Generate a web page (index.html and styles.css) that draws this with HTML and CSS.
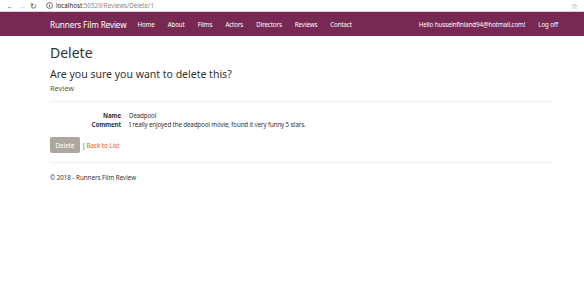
FILE: index.html
```html
<!DOCTYPE html>
<html lang="en">
<head>
  <meta charset="UTF-8">
  <title>Delete - Runners Film Review</title>
  <link rel="stylesheet" href="styles.css">
</head>
<body>
  <div class="chrome">
    <span class="nav-btn">&#8592;</span>
    <span class="nav-btn dim">&#8594;</span>
    <span class="nav-btn">&#8635;</span>
    <div class="url">
      <svg class="info" width="7" height="7" viewBox="0 0 10 10"><circle cx="5" cy="5" r="4.2" fill="none" stroke="#555" stroke-width="1.2"/><rect x="4.4" y="4.3" width="1.2" height="3" fill="#555"/><rect x="4.4" y="2.5" width="1.2" height="1.1" fill="#555"/></svg>
      <span class="host">localhost</span><span class="path">:50529/Reviews/Delete/1</span>
    </div>
    <span class="star">&#9734;</span>
  </div>

  <nav class="navbar">
    <a class="brand" href="#">Runners Film Review</a>
    <ul class="menu">
      <li>Home</li>
      <li>About</li>
      <li>Films</li>
      <li>Actors</li>
      <li>Directors</li>
      <li>Reviews</li>
      <li>Contact</li>
    </ul>
    <ul class="menu right">
      <li>Hello husseinfinland94@hotmail.com!</li>
      <li>Log off</li>
    </ul>
  </nav>

  <div class="container">
    <h1>Delete</h1>
    <h3>Are you sure you want to delete this?</h3>
    <div>
      <h4>Review</h4>
      <hr class="top">
      <dl class="details">
        <dt>Name</dt>
        <dd>Deadpool</dd>
        <dt>Comment</dt>
        <dd>I really enjoyed the deadpool movie, found it very funny 5 stars.</dd>
      </dl>
      <div class="actions">
        <button class="btn">Delete</button>
        <span class="sep">|</span>
        <a href="#">Back to List</a>
      </div>
    </div>
    <hr class="bottom">
    <footer>&copy; 2018 - Runners Film Review</footer>
  </div>
</body>
</html>
```

FILE: styles.css
```css
body {
  margin: 0;
  font-family: 'Noto Sans', sans-serif;
  color: #333;
  background: #fff;
}
.chrome {
  display: flex;
  align-items: center;
  height: 11px;
  padding: 0 6px;
  border-bottom: 1px solid #d4d4d4;
  font-size: 8px;
  color: #555;
}
.nav-btn {
  width: 12px;
  font-size: 8px;
  line-height: 11px;
}
.nav-btn.dim {
  color: #bbb;
}
.url {
  flex: 1;
  display: flex;
  align-items: center;
  margin-left: 4px;
  font-size: 6.2px;
}
.info {
  margin-right: 3px;
}
.host {
  color: #222;
}
.path {
  color: #888;
}
.star {
  font-size: 8px;
  color: #666;
}
.navbar {
  display: flex;
  align-items: center;
  height: 24px;
  padding: 0 26px 0 50px;
  background: #772953;
  color: #fff;
}
.brand {
  color: #fff;
  text-decoration: none;
  font-size: 8.2px;
  letter-spacing: -0.15px;
  margin-right: 11px;
}
.menu {
  display: flex;
  list-style: none;
  margin: 0;
  padding: 0;
  font-size: 6.2px;
  letter-spacing: -0.1px;
  gap: 13px;
}
.menu.right {
  margin-left: auto;
}
.container {
  width: 502px;
  padding: 0 32px 0 50px;
}
h1 {
  font-weight: 400;
  font-size: 14px;
  margin: 8px 0 5px;
  line-height: 18px;
}
h3 {
  font-weight: 400;
  font-size: 10.5px;
  margin: 0 0 1px;
  line-height: 15px;
}
h4 {
  font-weight: 400;
  font-size: 7.4px;
  margin: 0;
  line-height: 11px;
  color: #555;
}
hr {
  border: 0;
  border-top: 1px solid #eee;
  margin: 8px 0;
}
hr.top {
  margin: 7px 0 9px;
}
hr.bottom {
  margin: 9px 0 10px;
}
.details {
  display: grid;
  grid-template-columns: 71px 1fr;
  column-gap: 8px;
  margin: 0 0 8px;
  font-size: 6.2px;
  letter-spacing: -0.12px;
  line-height: 9px;
}
.details dt {
  text-align: right;
  font-weight: 700;
}
.details dd {
  margin: 0;
}
.actions {
  display: flex;
  align-items: center;
  font-size: 6.2px;
}
.btn {
  font-family: inherit;
  font-size: 6.2px;
  color: #fff;
  background: #aea79f;
  border: 0;
  border-radius: 2px;
  width: 30px;
  height: 16px;
  padding: 0;
  margin-right: 2px;
}
.sep {
  color: #333;
  margin-right: 1px;
}
.actions a {
  color: #e95420;
  text-decoration: none;
}
footer {
  font-size: 6.2px;
  line-height: 9px;
}
```
